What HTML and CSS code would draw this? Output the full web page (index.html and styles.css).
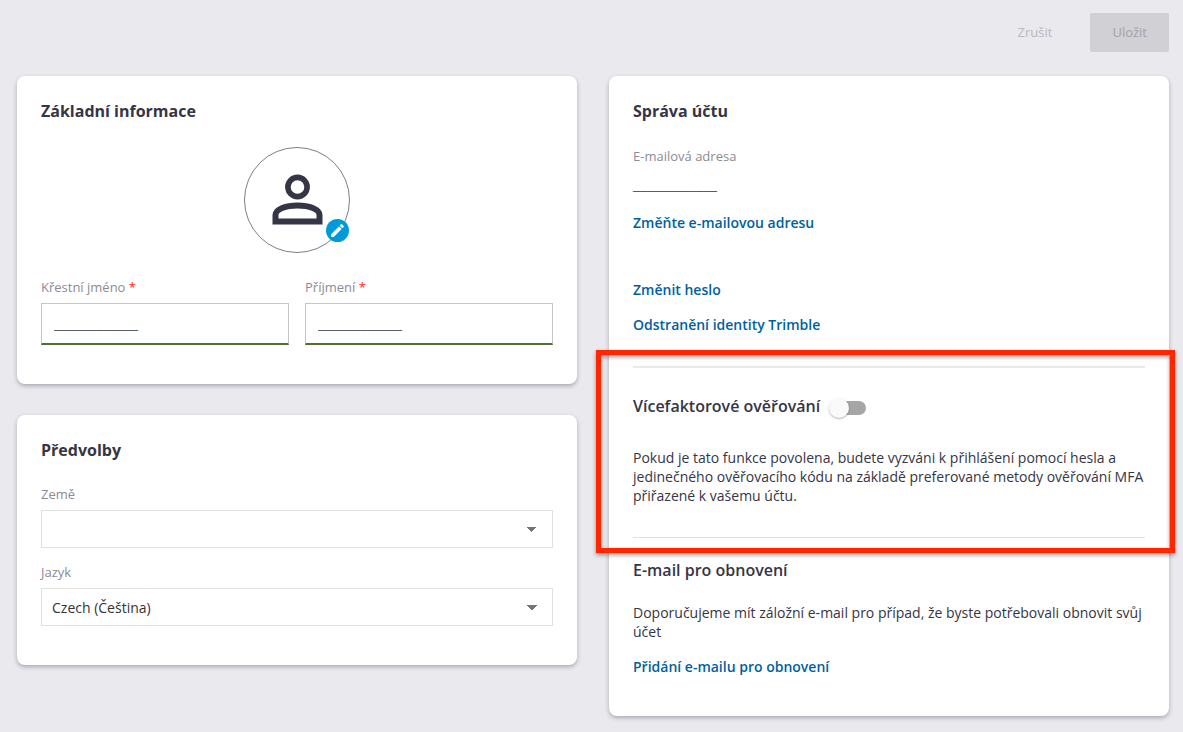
FILE: index.html
```
<!DOCTYPE html>
<html lang="cs">
<head>
    <meta charset="UTF-8">
    <meta name="viewport" content="width=device-width, initial-scale=1">
    <title>Profil</title>
    <link rel="stylesheet" href="styles.css">
</head>
<body>
    <header class="toolbar">
        <button type="button" class="btn btn-cancel" disabled>Zrušit</button>
        <button type="button" class="btn btn-save" disabled>Uložit</button>
    </header>
    <main class="columns">
        <div class="column">
            <section class="card">
                <h2>Základní informace</h2>
                <div class="avatar">
                    <svg class="avatar-icon" viewBox="0 0 52 52" aria-hidden="true">
                        <circle cx="26.500" cy="13" r="9.600" fill="none" stroke="#353545" stroke-width="5.600"/>
                        <path d="M4.500 47.500V41C4.500 35 15 31.500 26.500 31.500S48.500 35 48.500 41V47.500Z" fill="none" stroke="#353545" stroke-width="6"/>
                    </svg>
                    <button type="button" class="avatar-edit" aria-label="Upravit">
                        <svg viewBox="0 0 24 24" aria-hidden="true">
                            <path fill="#fff" d="M3 17.250V21h3.750L17.810 9.940l-3.750-3.750L3 17.250zM20.710 7.040a1 1 0 0 0 0-1.410l-2.340-2.340a1 1 0 0 0-1.410 0l-1.830 1.830 3.750 3.750 1.830-1.830z"/>
                        </svg>
                    </button>
                </div>
                <div class="names">
                    <div class="field">
                        <label for="first-name">Křestní jméno <span class="required">*</span></label>
                        <input type="text" id="first-name" value="____________">
                    </div>
                    <div class="field">
                        <label for="last-name">Příjmení <span class="required">*</span></label>
                        <input type="text" id="last-name" value="____________">
                    </div>
                </div>
            </section>
            <section class="card">
                <h2>Předvolby</h2>
                <div class="preferences">
                    <div class="field">
                        <label for="country">Země</label>
                        <select id="country">
                            <option></option>
                        </select>
                    </div>
                    <div class="field">
                        <label for="language">Jazyk</label>
                        <select id="language">
                            <option>Czech (Čeština)</option>
                        </select>
                    </div>
                </div>
            </section>
        </div>
        <section class="card account">
            <h2>Správa účtu</h2>
            <div class="email">
                <div class="email-label">E-mailová adresa</div>
                <div class="email-value">____________</div>
                <a href="#">Změňte e-mailovou adresu</a>
            </div>
            <div class="links">
                <a href="#">Změnit heslo</a>
                <a href="#">Odstranění identity Trimble</a>
            </div>
            <div class="mfa">
                <div class="mfa-title">
                    <label for="mfa-toggle">Vícefaktorové ověřování</label>
                    <input type="checkbox" id="mfa-toggle" class="toggle" role="switch">
                </div>
                <p>Pokud je tato funkce povolena, budete vyzváni k přihlášení pomocí hesla a jedinečného ověřovacího kódu na základě preferované metody ověřování MFA přiřazené k vašemu účtu.</p>
            </div>
            <div class="recovery">
                <h3>E-mail pro obnovení</h3>
                <p>Doporučujeme mít záložní e-mail pro případ, že byste potřebovali obnovit svůj účet</p>
                <a href="#">Přidání e-mailu pro obnovení</a>
            </div>
        </section>
    </main>
</body>
</html>
```
FILE: styles.css
```
* {
    box-sizing: border-box;
}
body {
    margin: 0;
    padding: 13px 14px 16px 17px;
    background-color: #eae9ee;
    color: #353545;
    font-family: "Open Sans", sans-serif;
    font-size: 14px;
    line-height: 20px;
}
.toolbar {
    display: flex;
    justify-content: flex-end;
    gap: 16px;
    margin-bottom: 24px;
}
.btn {
    height: 39px;
    padding: 0 22px 2px;
    border: none;
    border-radius: 2px;
    background: none;
    color: #b9b8be;
    font-family: inherit;
    font-size: 13px;
}
.btn-save {
    background-color: #d1d0d5;
    color: #a3a2a8;
}
.columns {
    display: grid;
    grid-template-columns: 1fr 1fr;
    gap: 32px;
    align-items: start;
}
.column {
    display: grid;
    gap: 31px;
}
.card {
    padding: 23px 24px 39px;
    border-radius: 8px;
    background-color: #fff;
    box-shadow: 0 2px 4px rgba(53, 53, 69, 0.35);
}
h2, h3 {
    margin: 0;
    font-size: 16px;
    line-height: 24px;
}
h2 {
    font-weight: 700;
}
h3 {
    font-weight: 600;
}
p {
    margin: 0;
    line-height: 19px;
}
a {
    display: block;
    color: #005f9e;
    font-weight: 600;
    text-decoration: none;
}
.avatar {
    position: relative;
    display: flex;
    align-items: center;
    justify-content: center;
    width: 106px;
    height: 106px;
    margin: 24px auto;
    border: 1px solid #7d7d88;
    border-radius: 50%;
}
.avatar-icon {
    width: 52px;
    height: 52px;
}
.avatar-edit {
    position: absolute;
    right: 0;
    bottom: 10px;
    display: flex;
    align-items: center;
    justify-content: center;
    width: 23px;
    height: 23px;
    padding: 0;
    border: none;
    border-radius: 50%;
    background-color: #009ad9;
}
.avatar-edit svg {
    width: 17px;
    height: 17px;
}
.names {
    display: grid;
    grid-template-columns: 1fr 1fr;
    gap: 16px;
}
.preferences {
    display: grid;
    gap: 14px;
    margin-top: 22px;
}
.field label, .email-label {
    display: block;
    color: #8b8b94;
    font-size: 13px;
}
.required {
    color: #f22;
}
.field input, .field select {
    display: block;
    width: 100%;
    margin-top: 6px;
    border: 1px solid #c5c5c5;
    border-radius: 0;
    background-color: #fff;
    color: #353545;
    font-family: inherit;
    font-size: 14px;
}
.field input {
    height: 42px;
    padding: 2px 12px 0;
    border-bottom: 2px solid #4e7130;
    font-family: "Liberation Serif", serif;
}
.field select {
    height: 38px;
    padding: 0 10px;
    border-color: #e0e0e0;
    appearance: none;
    color: #333;
    /* dropdown arrow */
    background-image: linear-gradient(to top right, transparent 50%, #757575 50%), linear-gradient(to top left, transparent 50%, #757575 50%);
    background-position: right 20px center, right 15px center;
    background-size: 5px 5px;
    background-repeat: no-repeat;
}
.email {
    margin-top: 23px;
}
.email-value {
    margin: 10px 0 17px;
    font-family: "Liberation Serif", serif;
}
.links {
    display: grid;
    gap: 15px;
    margin: 47px 0 31px;
}
.mfa {
    position: relative;
    padding: 26px 0 32px;
    border-top: 2px solid #eae9ee;
    border-bottom: 1px solid #e0e0e0;
}
/* red highlight around the section */
.mfa::after {
    content: '';
    position: absolute;
    top: -18px;
    right: -30px;
    bottom: -16px;
    left: -37px;
    border: 5px solid #ff2600;
    filter: drop-shadow(0 2px 2px rgba(0, 0, 0, 0.4));
    pointer-events: none;
}
.mfa-title {
    display: flex;
    align-items: center;
    gap: 10px;
    margin-bottom: 30px;
    font-size: 16px;
    font-weight: 600;
    line-height: 24px;
}
.toggle {
    position: relative;
    width: 36px;
    height: 14px;
    margin: 4px 0 0;
    border-radius: 7px;
    background-color: #a6a6a6;
    appearance: none;
}
.toggle::before {
    content: '';
    position: absolute;
    top: -3px;
    left: -1px;
    width: 20px;
    height: 20px;
    border-radius: 50%;
    background-color: #fafafa;
    box-shadow: 0 1px 2px rgba(0, 0, 0, 0.3);
}
.recovery {
    padding-top: 20px;
}
.recovery p {
    margin: 21px 0 16px;
}
```
